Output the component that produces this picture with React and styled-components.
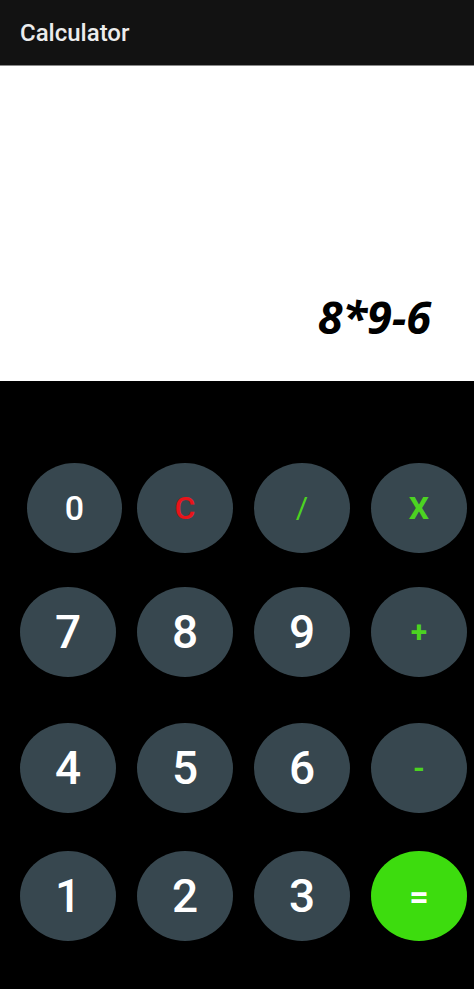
import React from 'react';
import styled, { createGlobalStyle } from 'styled-components';

const GlobalStyle = createGlobalStyle`
  html, body {
    margin: 0;
    padding: 0;
    background: #000000;
  }
  body {
    font-family: Roboto, "Noto Sans", sans-serif;
  }
`;

const Screen = styled.div`
  display: flex;
  flex-direction: column;
  width: 474px;
  height: 989px;
  background: #000000;
  overflow: hidden;
`;

const TopBar = styled.header`
  box-sizing: border-box;
  display: flex;
  align-items: center;
  height: 66px;
  padding: 0 20px;
  background: #121212;
  border-bottom: 1px solid #8a8a8a;
  color: #ececec;
  font-size: 24px;
  font-weight: 500;
`;

const Display = styled.div`
  box-sizing: border-box;
  display: flex;
  align-items: flex-end;
  justify-content: flex-end;
  height: 315px;
  padding: 0 43px 42px 0;
  background: #ffffff;
`;

const Expression = styled.span`
  color: #000000;
  font-family: "Open Sans", "Noto Sans", sans-serif;
  font-size: 45px;
  font-style: italic;
  font-weight: 700;
  line-height: 1;
`;

const Keypad = styled.div`
  display: grid;
  grid-template-columns: repeat(4, 96px);
  grid-template-rows: 124px 136px 128px 90px;
  column-gap: 21px;
  padding: 82px 0 0 20px;
`;

const Key = styled.button`
  display: flex;
  align-items: center;
  justify-content: center;
  width: ${p => (p.$narrow ? 95 : 96)}px;
  height: 90px;
  margin-left: ${p => (p.$shift ? 7 : 0)}px;
  padding: 0;
  border: none;
  border-radius: 50%;
  background: ${p => (p.$accent ? '#3ddc0e' : '#37474f')};
  color: ${p => p.$color || '#ffffff'};
  font-family: Roboto, "Noto Sans", sans-serif;
  font-size: ${p => p.$size || 46}px;
  font-weight: ${p => p.$weight || 500};
  line-height: 1;
`;

const keys = [
  { label: '0', size: 34, shift: true, narrow: true },
  { label: 'C', size: 32, color: '#e8141a' },
  { label: '/', size: 30, weight: 400, color: '#4cd321' },
  { label: 'X', size: 32, weight: 700, color: '#4cd321' },
  { label: '7' },
  { label: '8' },
  { label: '9' },
  { label: '+', size: 30, weight: 700, color: '#4cd321' },
  { label: '4' },
  { label: '5' },
  { label: '6' },
  { label: '-', size: 30, weight: 700, color: '#4cd321' },
  { label: '1' },
  { label: '2' },
  { label: '3' },
  { label: '=', size: 34, weight: 700, accent: true }
];

export default function App() {
  return (
    <Screen>
      <GlobalStyle />
      <TopBar>Calculator</TopBar>
      <Display>
        <Expression>8*9-6</Expression>
      </Display>
      <Keypad>
        {keys.map(k => (
          <Key
            key={k.label}
            $size={k.size}
            $weight={k.weight}
            $color={k.color}
            $accent={k.accent}
            $shift={k.shift}
            $narrow={k.narrow}
          >
            {k.label}
          </Key>
        ))}
      </Keypad>
    </Screen>
  );
}
